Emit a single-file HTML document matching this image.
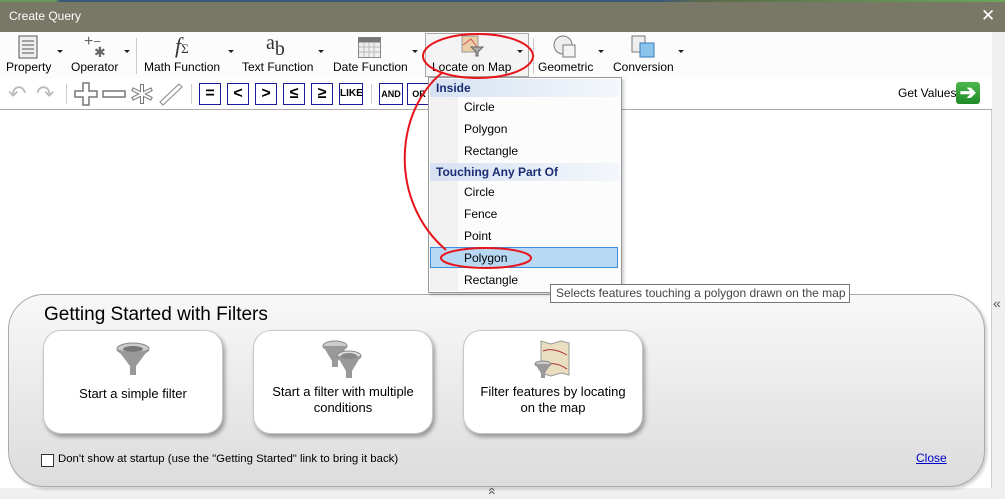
<!DOCTYPE html>
<html><head><meta charset="utf-8"><style>
*{margin:0;padding:0;box-sizing:border-box}
body{width:1005px;height:499px;overflow:hidden;background:#f0f0f0;font-family:"Liberation Sans",sans-serif;font-size:12px;color:#000;position:relative}
.a{position:absolute}
.t{position:absolute;white-space:nowrap}
.lbl{position:absolute;top:60px;font-size:12px;white-space:nowrap}
.dd{position:absolute;top:50px;width:0;height:0;border-left:3px solid transparent;border-right:3px solid transparent;border-top:3px solid #222}
.ob{position:absolute;top:83px;width:22px;height:22px;border:1px solid #1a1a9a;background:#fff;font-weight:bold;font-size:16px;text-align:center;line-height:20px}
.card{position:absolute;top:330px;width:180px;height:104px;background:#fff;border:1px solid #c8c8c8;border-radius:18px;box-shadow:2px 3px 4px rgba(0,0,0,.35);text-align:center;font-size:13px;line-height:16px}
.mi{position:absolute;left:464px;font-size:12px}
.mh{position:absolute;left:430px;width:190px;height:18px;background:linear-gradient(90deg,#d6e2f2,#f4f7fb);color:#1b2d74;font-weight:bold;padding-left:6px;line-height:18px}
</style></head><body>
<div class="a" style="left:0;top:0;width:1005px;height:2px;background:linear-gradient(90deg,#6a9a5a 0,#6a9a5a 55px,#3b5a7a 60px,#3b5a7a 660px,#5a6a4a 700px,#6aa55a 1005px)"></div>
<div class="a" style="left:0;top:2px;width:1005px;height:30px;background:#797766"></div>
<div class="t" style="left:9px;top:9px;color:#fff;font-size:12px">Create Query</div>
<div class="t" style="left:981px;top:6px;color:#fff;font-size:17px">✕</div>
<div class="a" style="left:0;top:32px;width:992px;height:78px;background:#fff"></div>
<div class="a" style="left:0;top:32px;width:992px;height:46px;background:#fcfcfc"></div>
<svg class="a" style="left:18px;top:35px" width="22" height="24"><rect x="1" y="1" width="18" height="22" fill="#eee" stroke="#555"/><g stroke="#555"><line x1="4" y1="6" x2="16" y2="6"/><line x1="4" y1="10" x2="16" y2="10"/><line x1="4" y1="14" x2="16" y2="14"/><line x1="4" y1="18" x2="16" y2="18"/></g></svg>
<div class="lbl" style="left:6px">Property</div><div class="dd" style="left:57px"></div>
<div class="t" style="left:84px;top:33px;font-size:16px;color:#666">+<span style="font-size:13px">−</span><br></div><div class="t" style="left:94px;top:44px;font-size:14px;color:#666">✱</div>
<div class="lbl" style="left:71px">Operator</div><div class="dd" style="left:124px"></div>
<div class="a" style="left:136px;top:38px;width:1px;height:36px;background:#ccc"></div>
<div class="t" style="left:175px;top:33px;font-size:22px;font-style:italic;font-family:'Liberation Serif',serif;color:#333">f<span style="font-size:13px;font-style:normal">Σ</span></div>
<div class="lbl" style="left:144px">Math Function</div><div class="dd" style="left:228px"></div>
<div class="t" style="left:266px;top:32px;font-size:20px;font-family:'Liberation Serif',serif;color:#333">a<span style="font-size:20px;position:relative;top:6px">b</span></div>
<div class="lbl" style="left:242px">Text Function</div><div class="dd" style="left:318px"></div>
<svg class="a" style="left:358px;top:37px" width="24" height="22"><rect x="0.5" y="0.5" width="22" height="20" fill="#eee" stroke="#888"/><rect x="0.5" y="0.5" width="22" height="5" fill="#777"/><g stroke="#bbb"><line x1="1" y1="10" x2="22" y2="10"/><line x1="1" y1="15" x2="22" y2="15"/><line x1="6" y1="6" x2="6" y2="20"/><line x1="11" y1="6" x2="11" y2="20"/><line x1="16" y1="6" x2="16" y2="20"/></g></svg>
<div class="lbl" style="left:333px">Date Function</div><div class="dd" style="left:412px"></div>
<div class="a" style="left:425px;top:33px;width:104px;height:44px;border:1px solid #aaa;background:#f4f4f4"></div>
<svg class="a" style="left:461px;top:35px" width="24" height="22"><rect x="1" y="1" width="16" height="16" fill="#eccfa8" stroke="#999"/><path d="M2 10 L10 4 L16 12" stroke="#c55" fill="none"/><path d="M10 12 h12 l-5 5 v4 h-2 v-4z" fill="#aaa" stroke="#666"/></svg>
<div class="lbl" style="left:432px">Locate on Map</div><div class="dd" style="left:517px"></div>
<div class="a" style="left:533px;top:38px;width:1px;height:36px;background:#ccc"></div>
<svg class="a" style="left:553px;top:35px" width="26" height="24"><circle cx="10" cy="10" r="9" fill="#eee" stroke="#777"/><rect x="10" y="10" width="12" height="12" fill="#f4f4f4" stroke="#777"/></svg>
<div class="lbl" style="left:538px">Geometric</div><div class="dd" style="left:598px"></div>
<svg class="a" style="left:631px;top:35px" width="26" height="26"><rect x="1" y="1" width="13" height="16" fill="#eee" stroke="#777"/><rect x="9" y="8" width="14" height="14" fill="#8cc4ec" stroke="#3a7ab8"/></svg>
<div class="lbl" style="left:613px">Conversion</div><div class="dd" style="left:678px"></div>
<div class="t" style="left:8px;top:81px;font-size:22px;color:#bbb">↶</div><div class="t" style="left:36px;top:81px;font-size:22px;color:#bbb">↷</div>
<div class="a" style="left:66px;top:84px;width:1px;height:20px;background:#ccc"></div>
<svg class="a" style="left:74px;top:82px" width="112" height="24"><path d="M9 1h6v8h8v6h-8v8h-6v-8h-8v-6h8z" fill="#fff" stroke="#777" stroke-width="1.5"/><rect x="29" y="9" width="22" height="6" fill="#fff" stroke="#777" stroke-width="1.5"/><g stroke="#777" stroke-width="4"><line x1="68" y1="2" x2="68" y2="22"/><line x1="58" y1="7" x2="78" y2="17"/><line x1="58" y1="17" x2="78" y2="7"/></g><g stroke="#fff" stroke-width="2"><line x1="68" y1="3" x2="68" y2="21"/><line x1="59" y1="7.5" x2="77" y2="16.5"/><line x1="59" y1="16.5" x2="77" y2="7.5"/></g><path d="M105 2 L108 5 L89 23 L86 20Z" fill="#fff" stroke="#888"/></svg>
<div class="a" style="left:191px;top:84px;width:1px;height:20px;background:#ccc"></div>
<div class="ob" style="left:199px">=</div><div class="ob" style="left:227px">&lt;</div><div class="ob" style="left:255px">&gt;</div><div class="ob" style="left:283px">≤</div><div class="ob" style="left:311px">≥</div><div class="ob" style="left:339px;width:24px;font-size:10px">LIKE</div>
<div class="a" style="left:371px;top:84px;width:1px;height:20px;background:#ccc"></div>
<div class="ob" style="left:379px;width:24px;font-size:9px">AND</div><div class="ob" style="left:407px;width:24px;font-size:9px">OR</div>
<div class="t" style="left:898px;top:86px;font-size:12px">Get Values</div>
<div class="a" style="left:956px;top:82px;width:24px;height:22px;background:linear-gradient(#4cb84c,#1f8a26);border-radius:3px;color:#fff;font-size:20px;line-height:22px;text-align:center;font-weight:bold">➔</div>
<div class="a" style="left:0;top:109px;width:992px;height:1px;background:#aaa"></div>
<div class="a" style="left:0;top:110px;width:992px;height:378px;background:#fff;border-right:1px solid #ccc"></div>
<div class="t" style="left:993px;top:295px;font-size:14px;color:#555">«</div>
<div class="a" style="left:8px;top:294px;width:977px;height:193px;border:1px solid #aaa;border-radius:36px;background:linear-gradient(#f8f8f8,#dcdcdc);box-shadow:2px 2px 3px rgba(0,0,0,.2)"></div>
<div class="t" style="left:44px;top:304px;font-size:19px">Getting Started with Filters</div>
<div class="card" style="left:43px"><svg style="margin-top:10px" width="36" height="36"><ellipse cx="18" cy="8" rx="16" ry="6" fill="#ccc" stroke="#888"/><path d="M2 8 Q18 14 34 8 L21 25 V34 H15 V25Z" fill="#999"/><ellipse cx="18" cy="8" rx="10" ry="3" fill="#777"/></svg><div style="margin-top:5px">Start a simple filter</div></div>
<div class="card" style="left:253px"><svg style="margin-top:8px" width="42" height="40"><g><ellipse cx="13" cy="7" rx="12" ry="5" fill="#ccc" stroke="#888"/><path d="M1 7 L10 22 V28 H16 V22 L25 7Z" fill="#999"/></g><g transform="translate(14,10)"><ellipse cx="13" cy="7" rx="12" ry="5" fill="#ddd" stroke="#888"/><path d="M1 7 L10 22 V29 H16 V22 L25 7Z" fill="#999"/><ellipse cx="13" cy="7" rx="8" ry="3" fill="#888"/></g></svg><div style="margin-top:1px">Start a filter with multiple<br>conditions</div></div>
<div class="card" style="left:463px"><svg style="margin-top:8px" width="40" height="40"><path d="M8 2 L18 5 L28 2 L36 4 V36 L28 34 L18 37 L8 34Z" fill="#e9dfc0" stroke="#999"/><path d="M10 12 Q20 8 34 16 M12 26 Q22 22 34 30" stroke="#a33" fill="none"/><ellipse cx="10" cy="25" rx="8" ry="3" fill="#ccc" stroke="#888"/><path d="M2 25 L8 34 V39 H12 V34 L18 25Z" fill="#999"/></svg><div style="margin-top:1px">Filter features by locating<br>on the map</div></div>
<div class="a" style="left:41px;top:454px;width:13px;height:13px;border:1px solid #333;background:#fff"></div>
<div class="t" style="left:58px;top:453px;font-size:11.4px">Don't show at startup (use the "Getting Started" link to bring it back)</div>
<div class="t" style="left:916px;top:451px;font-size:12px;color:#00c;text-decoration:underline">Close</div>
<div class="t" style="left:489px;top:483px;font-size:14px;color:#555;transform:rotate(90deg)">«</div>
<div class="a" style="left:428px;top:77px;width:194px;height:216px;border:1px solid #999;background:#fcfcfc;box-shadow:2px 2px 3px rgba(0,0,0,.2)"></div>
<div class="a" style="left:430px;top:96px;width:28px;height:195px;background:#f1f1f1"></div>
<div class="mh" style="top:79px">Inside</div>
<div class="mi" style="top:100px">Circle</div><div class="mi" style="top:122px">Polygon</div><div class="mi" style="top:144px">Rectangle</div>
<div class="mh" style="top:163px">Touching Any Part Of</div>
<div class="mi" style="top:185px">Circle</div><div class="mi" style="top:207px">Fence</div><div class="mi" style="top:229px">Point</div>
<div class="a" style="left:430px;top:247px;width:188px;height:21px;background:#b9d8f4;border:1px solid #3d8ee0"></div>
<div class="mi" style="top:251px">Polygon</div><div class="mi" style="top:273px">Rectangle</div>
<div class="a" style="left:550px;top:284px;width:300px;height:19px;border:1px solid #777;background:#fff;font-size:12px;color:#444;padding-left:5px;line-height:17px;white-space:nowrap">Selects features touching a polygon drawn on the map</div>
<svg class="a" style="left:0;top:0" width="1005" height="499"><g fill="none" stroke="#e8141c" stroke-width="2"><ellipse cx="478" cy="56" rx="55" ry="22"/><ellipse cx="486" cy="258" rx="45" ry="10"/><path d="M443 72 C395 110 388 200 446 250"/></g></svg>
</body></html>
